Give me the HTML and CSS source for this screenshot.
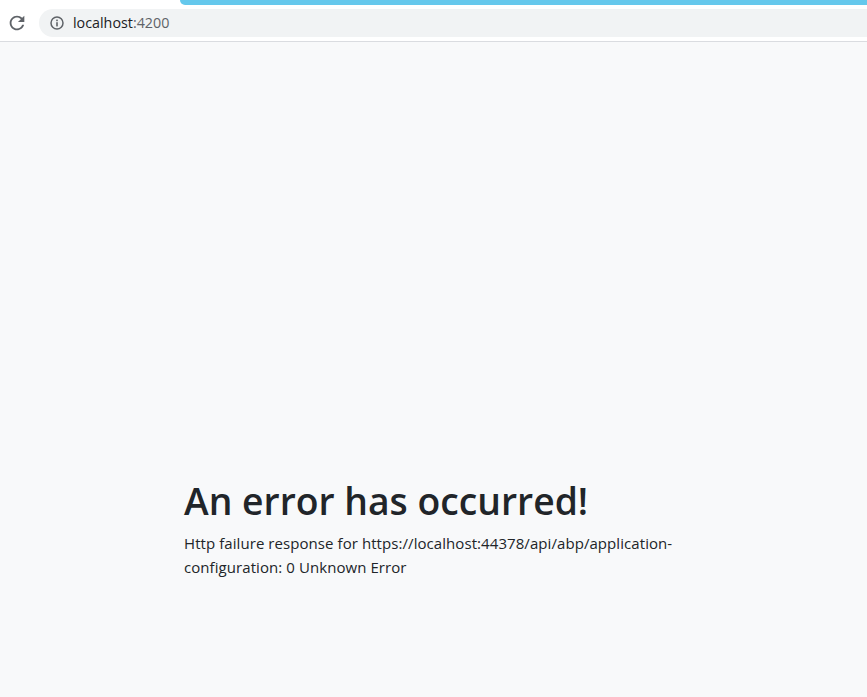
FILE: index.html
```html
<!DOCTYPE html>
<html lang="en">
<head>
<meta charset="utf-8">
<title>localhost:4200</title>
<link rel="stylesheet" href="styles.css">
</head>
<body>
<div class="progress-row"><div class="progress"></div></div>
<header class="toolbar">
  <svg class="reload" width="22" height="22" viewBox="0 0 24 24" aria-hidden="true"><path d="M17.65 6.35C16.2 4.9 14.21 4 12 4c-4.42 0-7.99 3.58-7.99 8s3.57 8 7.99 8c3.73 0 6.84-2.55 7.73-6h-2.08c-.82 2.33-3.04 4-5.65 4-3.31 0-6-2.69-6-6s2.69-6 6-6c1.66 0 3.14.69 4.22 1.78L13 11h7V4l-2.35 2.35z" fill="#5f6368"/></svg>
  <div class="omnibox">
    <svg class="info" width="14" height="14" viewBox="0 0 14 14" aria-hidden="true"><circle cx="7" cy="7" r="6" fill="none" stroke="#5f6368" stroke-width="1.5"/><rect x="6.2" y="6.2" width="1.6" height="4.2" fill="#5f6368"/><rect x="6.2" y="3.6" width="1.6" height="1.6" fill="#5f6368"/></svg>
    <span class="url"><span class="host">localhost</span><span class="port">:4200</span></span>
  </div>
</header>
<main class="page">
  <div class="message">
    <h1 class="title">An error has occurred!</h1>
    <p class="detail">Http failure response for https://localhost:44378/api/abp/application-configuration: 0 Unknown Error</p>
  </div>
</main>
</body>
</html>
```

FILE: styles.css
```css
html, body { margin: 0; height: 100%; overflow: hidden; }
body { display: flex; flex-direction: column; background: #f8f9fa; font-family: "Open Sans", "Noto Sans", sans-serif; }
.progress-row { display: flex; justify-content: flex-end; background: #fff; height: 5px; }
.progress { width: 687px; background: #65c8ec; border-bottom-left-radius: 5px; }
.toolbar { display: flex; align-items: center; height: 28px; padding: 4px 0 4px 6px; background: #fff; border-bottom: 1px solid #dadce0; }
.reload { flex: none; }
.omnibox { flex: 1; display: flex; align-items: center; height: 28px; margin-left: 11px; padding-left: 11px; background: #f1f3f4; border-radius: 14px 0 0 14px; }
.info { flex: none; }
.url { margin-left: 9px; font: 14.3px/28px "Open Sans", sans-serif; }
.host { color: #202124; }
.port { color: #5f6368; }
.page { flex: 1; display: flex; flex-direction: column; justify-content: flex-end; padding: 0 0 118px 184px; }
.message { width: 500px; }
.title { margin: 0 0 6px; font-size: 37.3px; line-height: 48px; font-weight: 600; color: #212529; }
.detail { margin: 0; font-size: 15px; line-height: 24px; letter-spacing: 0.07px; color: #212529; }
```
